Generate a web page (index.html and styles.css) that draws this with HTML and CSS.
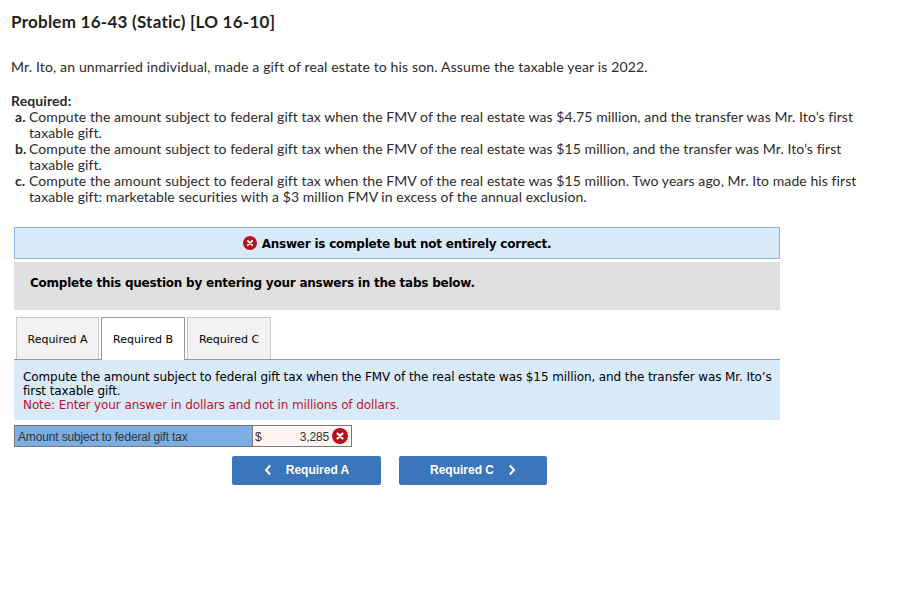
FILE: index.html
```html
<!DOCTYPE html>
<html lang="en">
<head>
<meta charset="utf-8">
<title>Problem 16-43</title>
<link rel="stylesheet" href="styles.css">
</head>
<body>
<div class="question">
  <h1 class="title">Problem 16-43 (Static) [LO 16-10]</h1>
  <p class="intro">Mr. Ito, an unmarried individual, made a gift of real estate to his son. Assume the taxable year is 2022.</p>
  <p class="req-head">Required:</p>
  <ol class="req-list">
    <li class="req-item"><b class="req-mark">a.</b><span>Compute the amount subject to federal gift tax when the FMV of the real estate was $4.75 million, and the transfer was Mr. Ito’s first taxable gift.</span></li>
    <li class="req-item"><b class="req-mark">b.</b><span>Compute the amount subject to federal gift tax when the FMV of the real estate was $15 million, and the transfer was Mr. Ito’s first taxable gift.</span></li>
    <li class="req-item"><b class="req-mark">c.</b><span>Compute the amount subject to federal gift tax when the FMV of the real estate was $15 million. Two years ago, Mr. Ito made his first taxable gift: marketable securities with a $3 million FMV in excess of the annual exclusion.</span></li>
  </ol>
</div>
<div class="answer">
  <div class="status">
    <svg class="x-icon" viewBox="0 0 14 14"><circle cx="7" cy="7" r="7" fill="#b5121b"/><path d="M4.8 4.8l4.4 4.4M9.2 4.8l-4.4 4.4" stroke="#fff" stroke-width="1.8" stroke-linecap="round"/></svg>
    <strong class="status-text">Answer is complete but not entirely correct.</strong>
  </div>
  <div class="instruction"><strong>Complete this question by entering your answers in the tabs below.</strong></div>
  <div class="tabs">
    <div class="tab">Required A</div>
    <div class="tab tab-active">Required B</div>
    <div class="tab">Required C</div>
  </div>
  <div class="panel">
    <p class="panel-text">Compute the amount subject to federal gift tax when the FMV of the real estate was $15 million, and the transfer was Mr. Ito’s first taxable gift.</p>
    <p class="panel-note">Note: Enter your answer in dollars and not in millions of dollars.</p>
  </div>
  <div class="grid-row">
    <div class="cell-label">Amount subject to federal gift tax</div>
    <div class="cell-value">
      <span class="cell-text">$</span>
      <span class="cell-text amount">3,285</span>
      <svg class="x-icon x-icon-cell" viewBox="0 0 14 14"><circle cx="7" cy="7" r="7" fill="#b5121b"/><path d="M4.8 4.8l4.4 4.4M9.2 4.8l-4.4 4.4" stroke="#fff" stroke-width="1.8" stroke-linecap="round"/></svg>
    </div>
  </div>
  <div class="nav">
    <div class="btn"><svg class="chev" viewBox="0 0 8 12"><path d="M6.2 1.5L2 6l4.2 4.5" fill="none" stroke="#fff" stroke-width="2"/></svg><span>Required A</span></div>
    <div class="btn btn-next"><span>Required C</span><svg class="chev" viewBox="0 0 8 12"><path d="M1.8 1.5L6 6l-4.2 4.5" fill="none" stroke="#fff" stroke-width="2"/></svg></div>
  </div>
</div>
</body>
</html>
```
FILE: styles.css
```css
* { box-sizing: border-box; }
html, body { margin: 0; padding: 0; background: #fff; }
body { width: 897px; height: 612px; overflow: hidden; color: #2b2b2b; font-family: Lato, "Liberation Sans", sans-serif; }
.question { padding: 12px 30px 0 11px; }
.title { margin: 0; font-size: 17px; line-height: 20px; font-weight: 700; letter-spacing: 0.25px; color: #1f1f1f; }
.intro { margin: 26px 0 0; font-size: 14px; line-height: 18px; letter-spacing: 0.15px; }
.req-head { margin: 17px 0 0; font-size: 14px; line-height: 16px; font-weight: 700; letter-spacing: 0.1px; }
.req-list { margin: 0; padding: 0 0 0 4px; list-style: none; }
.req-item { display: flex; font-size: 14px; line-height: 16px; letter-spacing: 0.08px; }
.req-mark { flex: 0 0 14px; }
.answer { width: 766px; margin: 22px 0 0 14px; font-family: "DejaVu Sans", Verdana, sans-serif; color: #000; }
.status { height: 32px; display: flex; align-items: center; justify-content: center; gap: 5px; background: #d9ebfa; border: 1px solid #8ab6e0; font-size: 12px; letter-spacing: -0.23px; }
.status-text { padding-top: 1px; }
.x-icon { width: 14px; height: 14px; flex: none; }
.x-icon-cell { width: 16px; height: 16px; }
.instruction { height: 48px; margin-top: 3px; padding: 13px 16px 0; background: #e0e0e0; font-size: 12px; line-height: 16px; letter-spacing: -0.23px; }
.tabs { display: flex; gap: 2px; margin-top: 7px; padding-left: 2px; border-bottom: 1px solid #999; }
.tab { height: 42px; width: 84px; padding-top: 1px; display: flex; align-items: center; justify-content: center; background: #f2f2f2; border: 1px solid #c8c8c8; border-bottom: 0; font-size: 11px; }
.tab:first-child { width: 83px; }
.tab-active { background: #fff; border-color: #999; margin-bottom: -1px; height: 43px; padding-top: 0; }
.panel { height: 60px; padding: 10px 4px 0 9px; background: #d9ebfa; font-size: 12px; line-height: 14px; letter-spacing: -0.1px; }
.panel-text { margin: 0; }
.panel-note { margin: 0; color: #c0102a; }
.grid-row { display: flex; width: 338px; height: 22px; margin-top: 5px; border: 1px solid #777; font-family: "Liberation Sans", Arial, sans-serif; font-size: 12px; color: #333; letter-spacing: -0.15px; }
.cell-label { width: 238px; padding: 1px 0 0 3px; line-height: 21px; background: #7aaee5; border-right: 1px solid #777; }
.cell-value { flex: 1; display: flex; align-items: center; padding: 0 3px 0 2px; background: #fff5f3; }
.cell-text { padding-top: 1px; }
.amount { margin-left: auto; margin-right: 3px; }
.nav { display: flex; gap: 18px; margin-top: 9px; padding-left: 218px; }
.btn { width: 149px; height: 29px; padding-bottom: 1px; display: flex; align-items: center; justify-content: center; gap: 14px; background: #3b76ba; border-radius: 2px; font-family: "Liberation Sans", Arial, sans-serif; font-size: 12px; font-weight: 700; color: #fff; }
.btn-next { width: 148px; }
.chev { width: 8px; height: 12px; flex: none; }
```
